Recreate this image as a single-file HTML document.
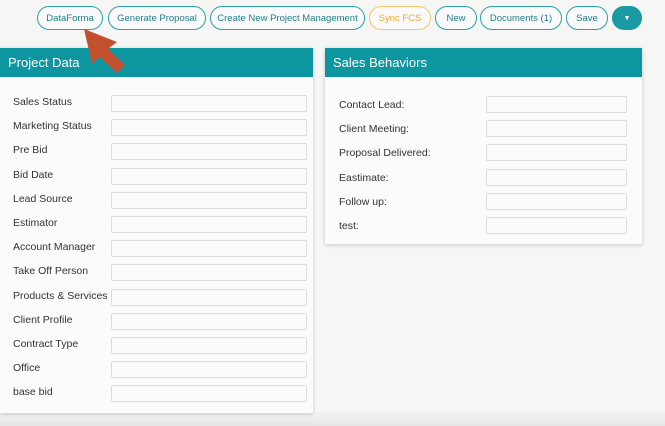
<!DOCTYPE html>
<html><head><style>
body{margin:0;width:665px;height:426px;background:#f6f6f5;font-family:"Liberation Sans",sans-serif;position:relative;overflow:hidden}
.btn{position:absolute;top:6px;height:24px;box-sizing:border-box;border:1.5px solid #2a9fa8;border-radius:12px;color:#1f7f8a;font-size:9.5px;display:flex;align-items:center;justify-content:center;background:#fafafa}
.panel{position:absolute;background:#fbfbfb;box-shadow:0 1px 4px rgba(0,0,0,.2)}
.hd{background:#0e96a0;color:#fff;font-size:13px;height:29px;line-height:29px;padding-left:8px}
.lb{position:absolute;font-size:10.5px;color:#333}
.in{position:absolute;height:17px;border:1px solid #ddd;border-radius:2px;background:#fbfbfb;box-sizing:border-box}
.bot{position:absolute;left:0;right:0;top:412px;height:14px;background:linear-gradient(#f3f3f3,#e6e6e6)}
</style></head><body>
<div class="bot"></div>
<div class="btn" style="left:37px;width:66px">DataForma</div>
<div class="btn" style="left:108px;width:98px">Generate Proposal</div>
<div class="btn" style="left:210px;width:155px">Create New Project Management</div>
<div class="btn" style="left:369px;width:62px;border-color:#f5c46c;color:#f0a830">Sync FCS</div>
<div class="btn" style="left:435px;width:42px">New</div>
<div class="btn" style="left:480px;width:82px">Documents (1)</div>
<div class="btn" style="left:566px;width:42px">Save</div>
<div class="btn" style="left:612px;width:30px;background:#1a9aa3;border-color:#1a9aa3;color:#fff;font-size:7px">▼</div>
<div class="panel" style="left:0;top:48px;width:313px;height:365px"><div class="hd">Project Data</div></div>
<div class="panel" style="left:325px;top:48px;width:317px;height:196px"><div class="hd">Sales Behaviors</div></div>
<div id="L"></div>
<svg style="position:absolute;left:0;top:0" width="140" height="80"><polygon points="84,29 117,42 108,49 125,65 117,73 100,57 92,64" fill="#c2502f"/></svg>
<script>
var l=["Sales Status","Marketing Status","Pre Bid","Bid Date","Lead Source","Estimator","Account Manager","Take Off Person","Products & Services","Client Profile","Contract Type","Office","base bid"],h="";
l.forEach(function(t,i){var y=96+i*24.2;h+='<div class="lb" style="left:13px;top:'+(y)+'px">'+t.replace("&","&amp;")+'</div><div class="in" style="left:111px;width:196px;top:'+(y-1)+'px"></div>'});
var r=["Contact Lead:","Client Meeting:","Proposal Delivered:","Eastimate:","Follow up:","test:"];
r.forEach(function(t,i){var y=99+i*24.2;h+='<div class="lb" style="left:339px;top:'+y+'px">'+t+'</div><div class="in" style="left:486px;width:141px;top:'+(y-3)+'px"></div>'});
document.getElementById("L").innerHTML=h;
</script>
</body></html>
